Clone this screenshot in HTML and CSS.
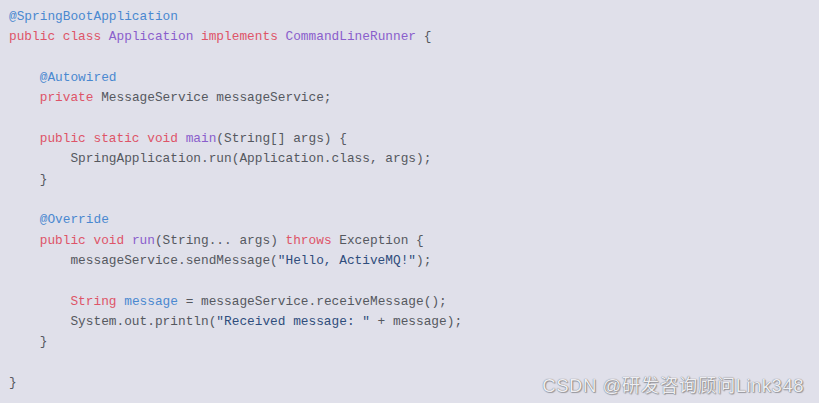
FILE: index.html
```html
<!DOCTYPE html>
<html>
<head>
<meta charset="utf-8">
<link rel="stylesheet" href="styles.css">
</head>
<body>
<div class="page">
<pre class="code"><span class="an">@SpringBootApplication</span>
<span class="kw">public class</span> <span class="ty">Application</span> <span class="kw">implements</span> <span class="ty">CommandLineRunner</span> {

    <span class="an">@Autowired</span>
    <span class="kw">private</span> MessageService messageService;

    <span class="kw">public static void</span> <span class="ty">main</span>(String[] args) {
        SpringApplication.run(Application.class, args);
    }

    <span class="an">@Override</span>
    <span class="kw">public void</span> <span class="ty">run</span>(String... args) <span class="kw">throws</span> Exception {
        messageService.sendMessage(<span class="st">"Hello, ActiveMQ!"</span>);

        <span class="kw">String</span> <span class="an">message</span> = messageService.receiveMessage();
        System.out.println(<span class="st">"Received message: "</span> + message);
    }

}</pre>
<div class="mark">CSDN @研发咨询顾问Link348</div>
</div>
</body>
</html>
```
FILE: styles.css
```css
html, body {
  margin: 0;
  padding: 0;
  background: #e0e0ea;
}
.page {
  position: relative;
  width: 819px;
  height: 403px;
  overflow: hidden;
}
.code {
  margin: 0;
  padding: 7px 0 0 9px;
  font-family: "Liberation Mono", "DejaVu Sans Mono", monospace;
  font-size: 12.8px;
  line-height: 20.33px;
  color: #55585f;
}
.an { color: #4a88d0; }
.kw { color: #de5468; }
.ty { color: #8a5ecc; }
.st { color: #2f4d7c; }
.mark {
  position: absolute;
  right: 15px;
  bottom: 6px;
  font-family: "Liberation Sans", "Noto Sans CJK SC", sans-serif;
  font-size: 18.5px;
  letter-spacing: 0.5px;
  color: #eeeef2;
  text-shadow: 0 0 1px #555, 1px 1px 1px rgba(0,0,0,0.3);
}
```
